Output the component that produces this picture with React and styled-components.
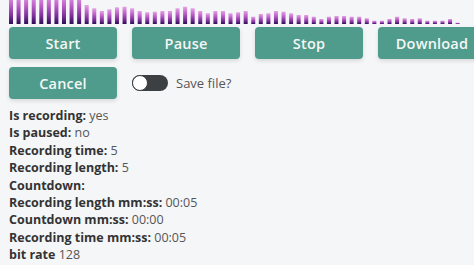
import React from "react";
import styled, { createGlobalStyle } from "styled-components";

const GlobalStyle = createGlobalStyle`
  html, body {
    margin: 0;
    padding: 0;
    background: #f5f6f8;
    overflow: hidden;
  }
  body {
    font-family: "Open Sans", "Liberation Sans", sans-serif;
  }
`;

const Page = styled.div`
  width: 474px;
  height: 265px;
  overflow: hidden;
`;

const Wave = styled.svg`
  display: block;
  width: 474px;
  height: 25px;
`;

const Content = styled.div`
  padding: 2px 9px 0;
  display: flex;
  flex-direction: column;
  gap: 8px;
`;

const Row = styled.div`
  display: flex;
  flex-wrap: nowrap;
  align-items: center;
  gap: 15px;
`;

const Button = styled.button`
  flex: 0 0 108px;
  height: 32px;
  border: none;
  border-radius: 4px;
  background: #4f9b8c;
  color: #f4f7f6;
  font-family: "Open Sans", sans-serif;
  font-size: 14.5px;
  font-weight: 600;
  letter-spacing: 0.2px;
  box-shadow: 0 2px 4px rgba(0, 0, 0, 0.12);
  cursor: pointer;
`;

const ToggleLabel = styled.label`
  display: flex;
  align-items: center;
  gap: 8px;
  font-size: 13px;
  color: #555;
`;

const Track = styled.span`
  position: relative;
  width: 36px;
  height: 16px;
  border-radius: 8px;
  background: ${(p) => (p.$on ? "#4f9b8c" : "#3d4043")};
`;

const Knob = styled.span`
  position: absolute;
  top: 0;
  left: ${(p) => (p.$on ? "20px" : "0")};
  width: 16px;
  height: 16px;
  box-sizing: border-box;
  border-radius: 50%;
  background: #fff;
  border: 1.5px solid #3d4043;
`;

const Stats = styled.div`
  margin-top: 0;
  font-size: 12.5px;
  line-height: 17.4px;
  color: #555;
`;

const Line = styled.div`
  b {
    color: #333;
    font-weight: 700;
  }
`;

const heights = [
  30, 30, 30, 30, 30, 30, 30, 30, 30, 30,
  19, 15.7, 13, 14.7, 16.7, 17.3, 15.7, 13, 11.7,
  12.3, 13, 13, 15.7, 17.3, 15.7, 13, 10.7, 13, 13, 10.7, 11.7, 13, 7.3, 10,
  10.7, 13, 12.3, 10.7, 9, 9,
  7.3, 5, 7.3, 8, 8, 7.3, 7.3, 5.7, 3.3, 3.3, 5, 7.3, 5.7, 5, 5.7, 3.3, 3.3,
  3.3, 5, 1.3,
];

const Waveform = () => (
  <Wave viewBox="0 0 474 25">
    <defs>
      <linearGradient id="bar" x1="0" y1="0" x2="0" y2="1">
        <stop offset="0" stopColor="#e3a3e4" />
        <stop offset="0.35" stopColor="#c265cc" />
        <stop offset="0.75" stopColor="#7a2c98" />
        <stop offset="1" stopColor="#2c0d55" />
      </linearGradient>
    </defs>
    {heights.map((h, i) => (
      <rect
        key={i}
        x={9 + i * 7.57}
        y={24 - h}
        width="4"
        height={h}
        fill="url(#bar)"
      />
    ))}
  </Wave>
);

const stats = [
  ["Is recording:", "yes"],
  ["Is paused:", "no"],
  ["Recording time:", "5"],
  ["Recording length:", "5"],
  ["Countdown:", ""],
  ["Recording length mm:ss:", "00:05"],
  ["Countdown mm:ss:", "00:00"],
  ["Recording time mm:ss:", "00:05"],
  ["bit rate", "128"],
];

export default function App() {
  return (
    <Page>
      <GlobalStyle />
      <Waveform />
      <Content>
        <Row>
          <Button>Start</Button>
          <Button>Pause</Button>
          <Button>Stop</Button>
          <Button>Download</Button>
        </Row>
        <Row>
          <Button>Cancel</Button>
          <ToggleLabel>
            <Track>
              <Knob />
            </Track>
            Save file?
          </ToggleLabel>
        </Row>
        <Stats>
          {stats.map(([k, v]) => (
            <Line key={k}>
              <b>{k}</b> {v}
            </Line>
          ))}
        </Stats>
      </Content>
    </Page>
  );
}
